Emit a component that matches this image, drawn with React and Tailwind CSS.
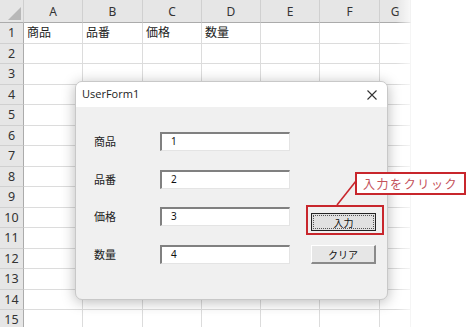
import React from "react";

const cols = ["A", "B", "C", "D", "E", "F", "G"];
const rows = Array.from({ length: 15 }, (_, i) => i + 1);
const row1 = ["商品", "品番", "価格", "数量", "", "", ""];

function Cell({ children }) {
  return (
    <div className="h-[20.5px] border-r border-b border-[#dcdcdc] bg-white pl-[3px] text-[12px] leading-[20px] text-[#222] overflow-hidden whitespace-nowrap">
      {children}
    </div>
  );
}

function TextBox({ value }) {
  return (
    <div className="w-[130px] h-[19px] bg-white border-t-2 border-l-2 border-t-[#808080] border-l-[#808080] border-b border-r border-b-[#e4e4e4] border-r-[#e4e4e4] pl-[9px] text-[10px] leading-[15px] text-[#111]">
      {value}
    </div>
  );
}

export default function App() {
  const font = { fontFamily: '"Noto Sans", "Noto Sans CJK JP", sans-serif' };
  return (
    <div className="relative w-[474px] h-[327px] overflow-hidden bg-white" style={font}>
      {/* Spreadsheet */}
      <div className="grid grid-cols-[24px_59px_60px_59px_59px_59px_60px_31px] w-[411px]">
        <div className="relative h-[23px] bg-[#e6e6e6] border-r border-b border-r-[#cfcfcf] border-b-[#ababab]">
          <svg className="absolute right-[2px] bottom-[2px]" width="13" height="13" viewBox="0 0 13 13">
            <polygon points="13,0 13,13 0,13" fill="#b8b8b8" />
          </svg>
        </div>
        {cols.map((c) => (
          <div
            key={c}
            className="h-[23px] bg-[#e6e6e6] border-r border-b border-r-[#d0d0d0] border-b-[#ababab] text-center text-[12px] leading-[23px] text-[#333] overflow-hidden"
          >
            {c}
          </div>
        ))}
        {rows.map((r) => (
          <React.Fragment key={r}>
            <div className="h-[20.5px] bg-[#e6e6e6] border-r border-b border-r-[#ababab] border-b-[#d0d0d0] text-center text-[12.5px] leading-[20px] text-[#333]">
              {r}
            </div>
            {cols.map((c, i) => (
              <Cell key={c}>{r === 1 ? row1[i] : ""}</Cell>
            ))}
          </React.Fragment>
        ))}
      </div>
      {/* right fade of sheet */}
      <div className="absolute top-0 left-[396px] w-[20px] h-[327px] bg-gradient-to-r from-transparent to-white" />

      {/* UserForm dialog */}
      <div className="absolute left-[75px] top-[81px] w-[313px] h-[219px] rounded-[7px] bg-[#f0f0f0] shadow-[0_2px_14px_rgba(0,0,0,0.28)] border border-[#c8c8c8] overflow-hidden flex flex-col">
        <div className="h-[25px] bg-white flex items-center justify-between pl-[6px] pr-[6px]">
          <span className="text-[11px] text-[#222]" style={{ fontFamily: '"Open Sans", "Noto Sans", sans-serif' }}>
            UserForm1
          </span>
          <svg width="16" height="16" viewBox="0 0 16 16" className="mr-[1px]">
            <path d="M3.5 3.5 L12.5 12.5 M12.5 3.5 L3.5 12.5" stroke="#333" strokeWidth="1.1" />
          </svg>
        </div>
        <div className="flex-1 flex pl-[18px] pt-[25px]">
          <div className="flex flex-col gap-[18.5px]">
            {[
              ["商品", "1"],
              ["品番", "2"],
              ["価格", "3"],
              ["数量", "4"],
            ].map(([label, v]) => (
              <div key={label} className="flex items-center h-[19px]">
                <span className="w-[66px] text-[11px] text-[#222]" style={{ fontFamily: '"Noto Sans CJK JP", sans-serif' }}>
                  {label}
                </span>
                <TextBox value={v} />
              </div>
            ))}
          </div>
          <div className="flex flex-col ml-[21px] pt-[81px] gap-[14px]">
            <div className="w-[65px] h-[18px] border border-[#222] bg-[#e1e1e1] p-[1px]">
              <div className="w-full h-full border border-dotted border-[#555] flex items-center justify-center text-[10px] text-[#111]" style={{ fontFamily: '"Noto Sans CJK JP", sans-serif' }}>
                入力
              </div>
            </div>
            <div className="w-[65px] h-[19px] bg-[#e6e6e6] border-t border-l border-t-[#ffffff] border-l-[#ffffff] border-b-2 border-r-2 border-b-[#8a8a8a] border-r-[#8a8a8a] flex items-center justify-center text-[10px] text-[#111]" style={{ fontFamily: '"Noto Sans CJK JP", sans-serif' }}>
              クリア
            </div>
          </div>
        </div>
      </div>

      {/* Red highlight around button */}
      <div className="absolute left-[306px] top-[205px] w-[78px] h-[30px] border-2 border-[#c8262c]" />
      {/* Callout line */}
      <svg className="absolute left-0 top-0" width="474" height="327">
        <line x1="356" y1="181" x2="337" y2="205" stroke="#c8262c" strokeWidth="1.6" />
      </svg>
      {/* Callout box */}
      <div
        className="absolute left-[355px] top-[172px] w-[111px] h-[23px] border-2 border-[#c8262c] bg-white flex items-center justify-center text-[12px] tracking-[1.6px] text-[#c4525a]"
        style={{ fontFamily: '"Noto Sans CJK JP", sans-serif' }}
      >
        入力をクリック
      </div>
    </div>
  );
}
